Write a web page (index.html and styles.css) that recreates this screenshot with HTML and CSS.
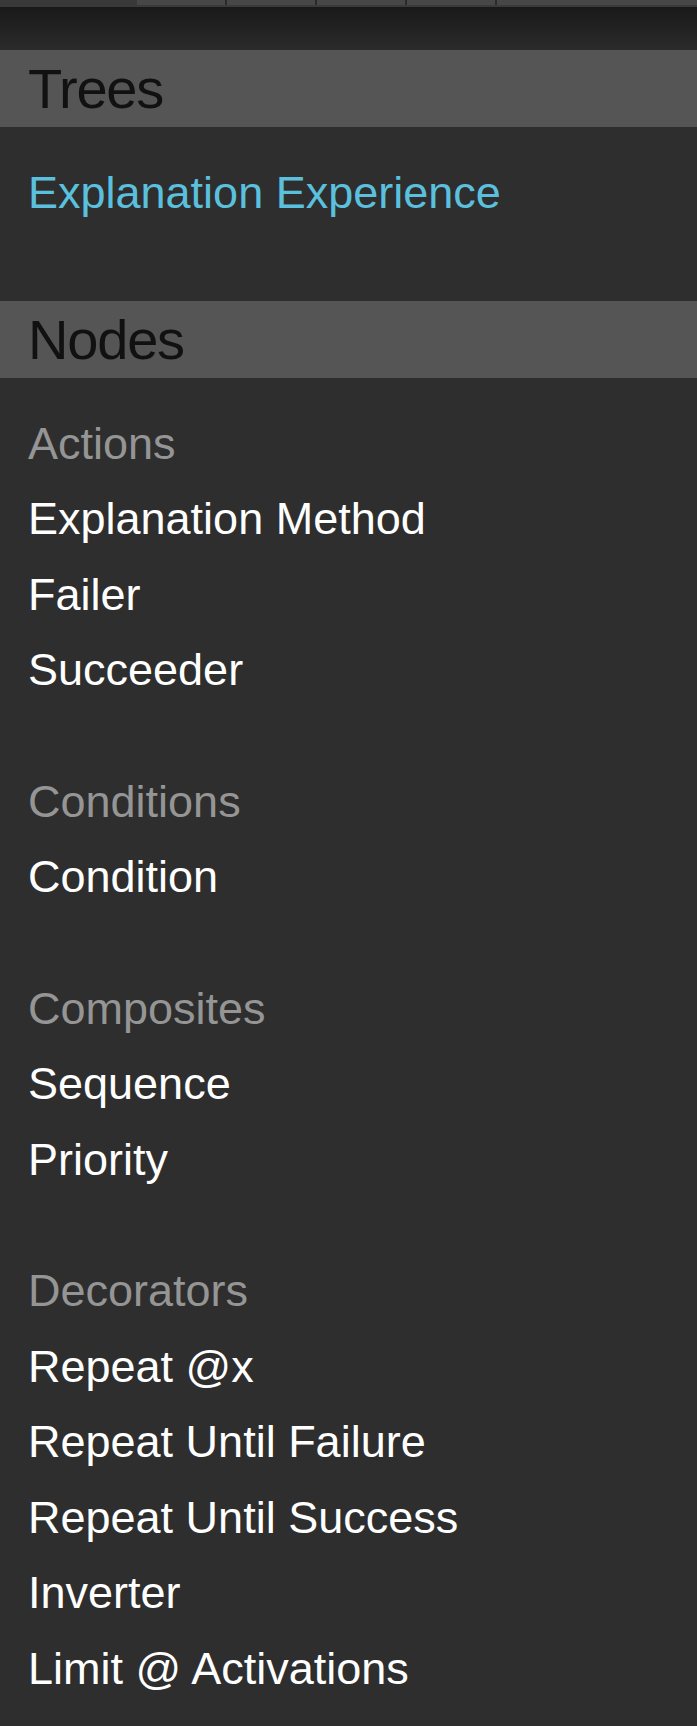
FILE: index.html
```html
<!DOCTYPE html>
<html lang="en">
<head>
<meta charset="utf-8">
<title>Sidebar</title>
<link rel="stylesheet" href="styles.css">
</head>
<body>
<div class="tabs">
  <div class="tab tab-active"></div>
  <div class="tab tab-sep"></div>
  <div class="tab tab-sep"></div>
  <div class="tab tab-sep"></div>
  <div class="tab tab-sep"></div>
  <div class="tab tab-rest"></div>
</div>
<div class="shade"></div>
<section class="panel">
  <h2 class="panel-title">Trees</h2>
  <ul class="list trees">
    <li class="item link">Explanation Experience</li>
  </ul>
</section>
<section class="panel">
  <h2 class="panel-title">Nodes</h2>
  <div class="groups">
    <ul class="list group">
      <li class="item cat">Actions</li>
      <li class="item">Explanation Method</li>
      <li class="item">Failer</li>
      <li class="item">Succeeder</li>
    </ul>
    <ul class="list group">
      <li class="item cat">Conditions</li>
      <li class="item">Condition</li>
    </ul>
    <ul class="list group">
      <li class="item cat">Composites</li>
      <li class="item">Sequence</li>
      <li class="item">Priority</li>
    </ul>
    <ul class="list group">
      <li class="item cat">Decorators</li>
      <li class="item">Repeat @x</li>
      <li class="item">Repeat Until Failure</li>
      <li class="item">Repeat Until Success</li>
      <li class="item">Inverter</li>
      <li class="item">Limit @ Activations</li>
    </ul>
  </div>
</section>
</body>
</html>
```
FILE: styles.css
```css
html, body {
  margin: 0;
  padding: 0;
  background: #2e2e2e;
  min-height: 1726px;
}
body {
  font-family: "Liberation Sans", Arial, sans-serif;
  color: #ffffff;
}
.tabs {
  display: flex;
  height: 5px;
  border-bottom: 2px solid #3a3a3a;
}
.tab {
  height: 5px;
  background: #474747;
}
.tab-active {
  width: 137px;
  background: #393939;
}
.tab-sep {
  width: 88px;
  border-right: 2px solid #2a2a2a;
}
.tab-rest {
  flex: 1;
}
.shade {
  height: 43px;
  background: linear-gradient(to bottom, #191919, #2b2b2b);
}
.panel-title {
  margin: 0;
  height: 77px;
  line-height: 77px;
  background: #555555;
  color: #111111;
  font-weight: normal;
  font-size: 56px;
  letter-spacing: -1.2px;
  padding-left: 28px;
}
.list {
  list-style: none;
  margin: 0;
  padding: 0;
}
.trees {
  padding-top: 28px;
  padding-bottom: 70px;
}
.groups {
  padding-top: 28px;
}
.group {
  margin-bottom: 56px;
}
.item {
  font-size: 45px;
  line-height: 75.5px;
  padding-left: 28px;
  white-space: nowrap;
}
.link {
  color: #5bc0de;
}
.cat {
  color: #959595;
}
```
